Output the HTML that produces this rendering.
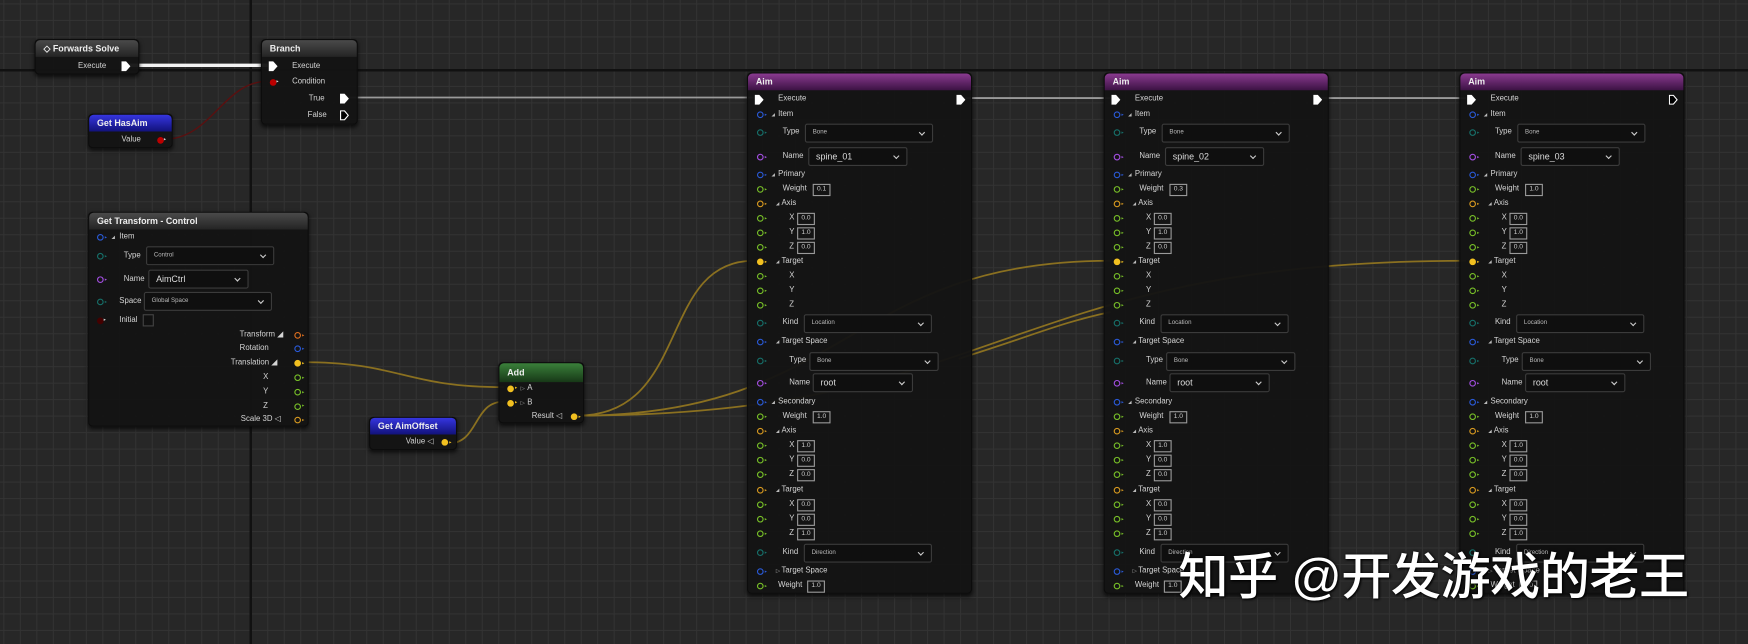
<!DOCTYPE html>
<html><head><meta charset="utf-8"><style>
*{margin:0;padding:0;box-sizing:border-box}
html,body{width:1748px;height:644px;overflow:hidden;background:#262626}
#w{position:absolute;left:0;top:0;width:1568px;height:578px;transform:scale(1.1148,1.1142);transform-origin:0 0;
background-color:#272727;
background-image:linear-gradient(90deg,transparent 224px,#111 224px,#111 226px,transparent 226px),
linear-gradient(0deg,transparent 514px,#111 514px,#111 516px,transparent 516px),
linear-gradient(90deg,#333 1px,transparent 1px),linear-gradient(0deg,#333 1px,transparent 1px);
background-size:100% 100%,100% 100%,14.8px 14.8px,14.8px 14.8px;background-position:0 0,0 0,3px 0,0 4px;
font-family:"Liberation Sans",sans-serif;color:#d8d8d8}
svg.wires{position:absolute;left:0;top:0}
.n{position:absolute;background:rgba(20,20,20,.96);border-radius:4px;box-shadow:0 2px 4px rgba(0,0,0,.7);border:1px solid #0c0c0c}
.h{position:absolute;left:0;top:0;right:0;border-radius:4px 4px 0 0;font-weight:bold;font-size:8px;color:#eee;padding-left:7px;line-height:15px;height:15px}
.gr{background:linear-gradient(#4a4a4a,#242424)}
.bl{background:linear-gradient(#3535e0,#12127a)}
.pp{background:linear-gradient(#8a3a90,#3c1244)}
.gn{background:linear-gradient(#3a803a,#173817)}
.t{position:absolute;font-size:7px;line-height:10px;height:10px;margin-top:-5px;white-space:nowrap;color:#d4d4d4}
.tr{position:absolute;font-size:4px;line-height:10px;height:10px;margin-top:-5px;color:#bbb}
.p{position:absolute;width:6px;height:6px;margin:-3px 0 0 -3px;border-radius:50%;border:1.3px solid}
.p::after{content:"";position:absolute;left:5.5px;top:0.6px;border-left:2px solid;border-left-color:inherit;border-top:1.2px solid transparent;border-bottom:1.2px solid transparent}
.b{border-color:#2a5ad8}.tl{border-color:#16706a}.pu{border-color:#a24ee0}.g{border-color:#78c028}.o{border-color:#d89a20}
.y{border-color:#f2c020;background:#f2c020}.r{border-color:#a00;background:#b00}
.rh{border-color:#600}
.e{position:absolute;width:8px;height:9px;margin:-4.5px 0 0 -4px}
.dd{position:absolute;background:#0f0f0f;border:1px solid #3b3b3b;border-radius:2px;font-size:5.5px;line-height:1;padding-left:6px;color:#bbb;display:flex;align-items:center}
.dd::after{content:"";position:absolute;right:7px;top:5px;width:3px;height:3px;border-right:1px solid #ccc;border-bottom:1px solid #ccc;transform:rotate(45deg)}
.dd.big{font-size:8px;color:#ddd}
.bx{position:absolute;height:11px;margin-top:-5.5px;border:1px solid #9a9a9a;font-size:6px;line-height:9px;text-align:center;color:#ccc}
.wm{position:absolute;left:1057px;top:481px;font-family:"Liberation Sans","Noto Sans CJK SC",sans-serif;font-size:45px;font-weight:500;color:#fff;white-space:nowrap;text-shadow:0 0 3px rgba(0,0,0,.8),1px 1px 2px #000;letter-spacing:-0.5px}
</style></head><body><div id="w">
<svg class="wires" width="1568" height="578" viewBox="0 0 1568 578" fill="none">
<path d="M116 58.6 H240" stroke="#f4f4f4" stroke-width="3"/>
<path d="M313 87.5 H676 M866 88 H996 M1185 88 H1315" stroke="#9a9a9a" stroke-width="1.6"/>
<path d="M147 125 C190 125 200 73 240 73" stroke="#5a1010" stroke-width="1.3"/>
<path d="M270 325 C360 325 362 347.5 452 347.5" stroke="#8a7020" stroke-width="1.6"/>
<path d="M402 398 C430 398 424 360.5 452 360.5" stroke="#8a7020" stroke-width="1.6"/>
<path d="M518 373 C620 373 590 234 676 234" stroke="#8a7020" stroke-width="1.6"/>
<path d="M518 373 C760 373 760 234 996 234" stroke="#8a7020" stroke-width="1.6"/>
<path d="M518 373 C900 373 900 234 1315 234" stroke="#8a7020" stroke-width="1.6"/>
<path d="M860 322 C930 300 950 290 996 280" stroke="#8a7020" stroke-width="1.6"/>
</svg>

<div class="n" style="left:31px;top:35px;width:94px;height:32px">
<div class="h gr">&#9671; Forwards Solve</div>
<div class="t" style="left:38px;top:23.6px">Execute</div>
<svg class="e" style="left:81px;top:23.6px" viewBox="0 0 8 9"><path d="M0 0H4L8 4.5L4 9H0Z" fill="#fff"/></svg>
</div>

<div class="n" style="left:234px;top:35px;width:87px;height:77px">
<div class="h gr">Branch</div>
<svg class="e" style="left:9.5px;top:23.6px" viewBox="0 0 8 9"><path d="M0 0H4L8 4.5L4 9H0Z" fill="#fff"/></svg>
<div class="t" style="left:27px;top:23.6px">Execute</div>
<div class="p r" style="left:10px;top:38px;border:none;width:6px;height:6px"></div>
<div class="t" style="left:27px;top:38px">Condition</div>
<div class="t" style="left:42px;top:52.5px">True</div>
<svg class="e" style="left:74px;top:52.5px" viewBox="0 0 8 9"><path d="M0 0H4L8 4.5L4 9H0Z" fill="#fff"/></svg>
<div class="t" style="left:41px;top:67.5px">False</div>
<svg class="e" style="left:74px;top:67.5px" viewBox="0 0 8 9"><path d="M0.5 0.5H4L7.4 4.5L4 8.5H0.5Z" stroke="#fff" stroke-width="1"/></svg>
</div>

<div class="n" style="left:79px;top:102px;width:76px;height:31px">
<div class="h bl">Get HasAim</div>
<div class="t" style="left:29px;top:23px">Value</div>
<div class="p r" style="left:64px;top:23px;border:none"></div>
</div>

<div class="n" style="left:79px;top:190px;width:198px;height:193px">
<div class="h gr">Get Transform - Control</div>
<div class="p b" style="left:10px;top:22px"></div><div class="tr" style="left:20px;top:22px">&#9698;</div><div class="t" style="left:27px;top:22px">Item</div>
<div class="p tl" style="left:10px;top:39px"></div><div class="t" style="left:31px;top:39px">Type</div>
<div class="dd" style="left:51px;top:30px;width:115px;height:17px">Control</div>
<div class="p pu" style="left:10px;top:60px"></div><div class="t" style="left:31px;top:60px">Name</div>
<div class="dd big" style="left:53px;top:51px;width:90px;height:17px">AimCtrl</div>
<div class="p tl" style="left:10px;top:80px"></div><div class="t" style="left:27px;top:80px">Space</div>
<div class="dd" style="left:49px;top:71px;width:115px;height:17px">Global Space</div>
<div class="p r rh" style="left:10px;top:97px;background:#400;border:none"></div><div class="t" style="left:27px;top:97px">Initial</div>
<div style="position:absolute;left:48px;top:91px;width:10px;height:11px;border:1px solid #444;background:#111"></div>
<div class="t" style="left:135px;top:110px">Transform &#9698;</div><div class="p o" style="left:187px;top:110px;border-color:#e07020"></div>
<div class="t" style="left:135px;top:122px">Rotation</div><div class="p b" style="left:187px;top:122px"></div>
<div class="t" style="left:127px;top:135px">Translation &#9698;</div><div class="p y" style="left:187px;top:135px"></div>
<div class="t" style="left:156px;top:148px">X</div><div class="p g" style="left:187px;top:148px"></div>
<div class="t" style="left:156px;top:161px">Y</div><div class="p g" style="left:187px;top:161px"></div>
<div class="t" style="left:156px;top:173.5px">Z</div><div class="p g" style="left:187px;top:173.5px"></div>
<div class="t" style="left:136px;top:186px">Scale 3D &#9665;</div><div class="p o" style="left:187px;top:186px"></div>
</div>

<div class="n" style="left:447px;top:325px;width:77px;height:55px">
<div class="h gn" style="height:17px;line-height:17px">Add</div>
<div class="p y" style="left:10px;top:22.5px"></div><div class="t" style="left:19px;top:22.5px;font-size:5px;color:#aaa">&#9655;</div><div class="t" style="left:25px;top:22.5px">A</div>
<div class="p y" style="left:10px;top:35.5px"></div><div class="t" style="left:19px;top:35.5px;font-size:5px;color:#aaa">&#9655;</div><div class="t" style="left:25px;top:35.5px">B</div>
<div class="t" style="left:29px;top:48px">Result &#9665;</div><div class="p y" style="left:67px;top:48px"></div>
</div>

<div class="n" style="left:331px;top:374px;width:79px;height:30px">
<div class="h bl">Get AimOffset</div>
<div class="t" style="left:32px;top:22px">Value &#9665;</div>
<div class="p y" style="left:67px;top:22px"></div>
</div>

<div class="n" style="left:670px;top:65px;width:202px;height:468px">
<div class="h pp">Aim</div>
<svg class="e" style="left:10px;top:23px" viewBox="0 0 8 9"><path d="M0 0H4L8 4.5L4 9H0Z" fill="#fff"/></svg>
<div class="t" style="left:27px;top:23px">Execute</div>
<svg class="e" style="left:191px;top:23px" viewBox="0 0 8 9"><path d="M0 0H4L8 4.5L4 9H0Z" fill="#fff"/></svg>
<div class="p b" style="left:11px;top:37px"></div><div class="tr" style="left:21px;top:37px">&#9698;</div><div class="t" style="left:27px;top:37px">Item</div>
<div class="p tl" style="left:11px;top:53px"></div><div class="t" style="left:31px;top:53px">Type</div><div class="dd" style="left:51px;top:45px;width:115px;height:17px">Bone</div>
<div class="p pu" style="left:11px;top:75px"></div><div class="t" style="left:31px;top:75px">Name</div><div class="dd big" style="left:54px;top:66px;width:89px;height:17px">spine_01</div>
<div class="p b" style="left:11px;top:91px"></div><div class="tr" style="left:21px;top:91px">&#9698;</div><div class="t" style="left:27px;top:91px">Primary</div>
<div class="p g" style="left:11px;top:104px"></div><div class="t" style="left:31px;top:104px">Weight</div><div class="bx" style="left:58px;top:104px;width:16px">0.1</div>
<div class="p o" style="left:11px;top:117px"></div><div class="tr" style="left:25px;top:117px">&#9698;</div><div class="t" style="left:30px;top:117px">Axis</div>
<div class="p g" style="left:11px;top:130px"></div><div class="t" style="left:37px;top:130px">X</div><div class="bx" style="left:44px;top:130px;width:16px">0.0</div>
<div class="p g" style="left:11px;top:143px"></div><div class="t" style="left:37px;top:143px">Y</div><div class="bx" style="left:44px;top:143px;width:16px">1.0</div>
<div class="p g" style="left:11px;top:156px"></div><div class="t" style="left:37px;top:156px">Z</div><div class="bx" style="left:44px;top:156px;width:16px">0.0</div>
<div class="p y" style="left:11px;top:169px"></div><div class="tr" style="left:25px;top:169px">&#9698;</div><div class="t" style="left:30px;top:169px">Target</div>
<div class="p g" style="left:11px;top:182px"></div><div class="t" style="left:37px;top:182px">X</div>
<div class="p g" style="left:11px;top:195px"></div><div class="t" style="left:37px;top:195px">Y</div>
<div class="p g" style="left:11px;top:208px"></div><div class="t" style="left:37px;top:208px">Z</div>
<div class="p tl" style="left:11px;top:224px"></div><div class="t" style="left:31px;top:224px">Kind</div><div class="dd" style="left:50px;top:216px;width:115px;height:17px">Location</div>
<div class="p b" style="left:11px;top:241px"></div><div class="tr" style="left:25px;top:241px">&#9698;</div><div class="t" style="left:30px;top:241px">Target Space</div>
<div class="p tl" style="left:11px;top:258px"></div><div class="t" style="left:37px;top:258px">Type</div><div class="dd" style="left:55px;top:250px;width:116px;height:17px">Bone</div>
<div class="p pu" style="left:11px;top:278px"></div><div class="t" style="left:37px;top:278px">Name</div><div class="dd big" style="left:58px;top:269px;width:90px;height:17px">root</div>
<div class="p b" style="left:11px;top:295px"></div><div class="tr" style="left:21px;top:295px">&#9698;</div><div class="t" style="left:27px;top:295px">Secondary</div>
<div class="p g" style="left:11px;top:308px"></div><div class="t" style="left:31px;top:308px">Weight</div><div class="bx" style="left:58px;top:308px;width:16px">1.0</div>
<div class="p o" style="left:11px;top:321px"></div><div class="tr" style="left:25px;top:321px">&#9698;</div><div class="t" style="left:30px;top:321px">Axis</div>
<div class="p g" style="left:11px;top:334px"></div><div class="t" style="left:37px;top:334px">X</div><div class="bx" style="left:44px;top:334px;width:16px">1.0</div>
<div class="p g" style="left:11px;top:347px"></div><div class="t" style="left:37px;top:347px">Y</div><div class="bx" style="left:44px;top:347px;width:16px">0.0</div>
<div class="p g" style="left:11px;top:360px"></div><div class="t" style="left:37px;top:360px">Z</div><div class="bx" style="left:44px;top:360px;width:16px">0.0</div>
<div class="p o" style="left:11px;top:374px"></div><div class="tr" style="left:25px;top:374px">&#9698;</div><div class="t" style="left:30px;top:374px">Target</div>
<div class="p g" style="left:11px;top:387px"></div><div class="t" style="left:37px;top:387px">X</div><div class="bx" style="left:44px;top:387px;width:16px">0.0</div>
<div class="p g" style="left:11px;top:400px"></div><div class="t" style="left:37px;top:400px">Y</div><div class="bx" style="left:44px;top:400px;width:16px">0.0</div>
<div class="p g" style="left:11px;top:413px"></div><div class="t" style="left:37px;top:413px">Z</div><div class="bx" style="left:44px;top:413px;width:16px">1.0</div>
<div class="p tl" style="left:11px;top:430px"></div><div class="t" style="left:31px;top:430px">Kind</div><div class="dd" style="left:50px;top:422px;width:115px;height:17px">Direction</div>
<div class="p b" style="left:11px;top:447px"></div><div class="t" style="left:25px;top:447px;font-size:5px;color:#aaa">&#9655;</div><div class="t" style="left:30px;top:447px">Target Space</div>
<div class="p g" style="left:11px;top:460px"></div><div class="t" style="left:27px;top:460px">Weight</div><div class="bx" style="left:53px;top:460px;width:16px">1.0</div>
</div>

<div class="n" style="left:990px;top:65px;width:202px;height:468px">
<div class="h pp">Aim</div>
<svg class="e" style="left:10px;top:23px" viewBox="0 0 8 9"><path d="M0 0H4L8 4.5L4 9H0Z" fill="#fff"/></svg>
<div class="t" style="left:27px;top:23px">Execute</div>
<svg class="e" style="left:191px;top:23px" viewBox="0 0 8 9"><path d="M0 0H4L8 4.5L4 9H0Z" fill="#fff"/></svg>
<div class="p b" style="left:11px;top:37px"></div><div class="tr" style="left:21px;top:37px">&#9698;</div><div class="t" style="left:27px;top:37px">Item</div>
<div class="p tl" style="left:11px;top:53px"></div><div class="t" style="left:31px;top:53px">Type</div><div class="dd" style="left:51px;top:45px;width:115px;height:17px">Bone</div>
<div class="p pu" style="left:11px;top:75px"></div><div class="t" style="left:31px;top:75px">Name</div><div class="dd big" style="left:54px;top:66px;width:89px;height:17px">spine_02</div>
<div class="p b" style="left:11px;top:91px"></div><div class="tr" style="left:21px;top:91px">&#9698;</div><div class="t" style="left:27px;top:91px">Primary</div>
<div class="p g" style="left:11px;top:104px"></div><div class="t" style="left:31px;top:104px">Weight</div><div class="bx" style="left:58px;top:104px;width:16px">0.3</div>
<div class="p o" style="left:11px;top:117px"></div><div class="tr" style="left:25px;top:117px">&#9698;</div><div class="t" style="left:30px;top:117px">Axis</div>
<div class="p g" style="left:11px;top:130px"></div><div class="t" style="left:37px;top:130px">X</div><div class="bx" style="left:44px;top:130px;width:16px">0.0</div>
<div class="p g" style="left:11px;top:143px"></div><div class="t" style="left:37px;top:143px">Y</div><div class="bx" style="left:44px;top:143px;width:16px">1.0</div>
<div class="p g" style="left:11px;top:156px"></div><div class="t" style="left:37px;top:156px">Z</div><div class="bx" style="left:44px;top:156px;width:16px">0.0</div>
<div class="p y" style="left:11px;top:169px"></div><div class="tr" style="left:25px;top:169px">&#9698;</div><div class="t" style="left:30px;top:169px">Target</div>
<div class="p g" style="left:11px;top:182px"></div><div class="t" style="left:37px;top:182px">X</div>
<div class="p g" style="left:11px;top:195px"></div><div class="t" style="left:37px;top:195px">Y</div>
<div class="p g" style="left:11px;top:208px"></div><div class="t" style="left:37px;top:208px">Z</div>
<div class="p tl" style="left:11px;top:224px"></div><div class="t" style="left:31px;top:224px">Kind</div><div class="dd" style="left:50px;top:216px;width:115px;height:17px">Location</div>
<div class="p b" style="left:11px;top:241px"></div><div class="tr" style="left:25px;top:241px">&#9698;</div><div class="t" style="left:30px;top:241px">Target Space</div>
<div class="p tl" style="left:11px;top:258px"></div><div class="t" style="left:37px;top:258px">Type</div><div class="dd" style="left:55px;top:250px;width:116px;height:17px">Bone</div>
<div class="p pu" style="left:11px;top:278px"></div><div class="t" style="left:37px;top:278px">Name</div><div class="dd big" style="left:58px;top:269px;width:90px;height:17px">root</div>
<div class="p b" style="left:11px;top:295px"></div><div class="tr" style="left:21px;top:295px">&#9698;</div><div class="t" style="left:27px;top:295px">Secondary</div>
<div class="p g" style="left:11px;top:308px"></div><div class="t" style="left:31px;top:308px">Weight</div><div class="bx" style="left:58px;top:308px;width:16px">1.0</div>
<div class="p o" style="left:11px;top:321px"></div><div class="tr" style="left:25px;top:321px">&#9698;</div><div class="t" style="left:30px;top:321px">Axis</div>
<div class="p g" style="left:11px;top:334px"></div><div class="t" style="left:37px;top:334px">X</div><div class="bx" style="left:44px;top:334px;width:16px">1.0</div>
<div class="p g" style="left:11px;top:347px"></div><div class="t" style="left:37px;top:347px">Y</div><div class="bx" style="left:44px;top:347px;width:16px">0.0</div>
<div class="p g" style="left:11px;top:360px"></div><div class="t" style="left:37px;top:360px">Z</div><div class="bx" style="left:44px;top:360px;width:16px">0.0</div>
<div class="p o" style="left:11px;top:374px"></div><div class="tr" style="left:25px;top:374px">&#9698;</div><div class="t" style="left:30px;top:374px">Target</div>
<div class="p g" style="left:11px;top:387px"></div><div class="t" style="left:37px;top:387px">X</div><div class="bx" style="left:44px;top:387px;width:16px">0.0</div>
<div class="p g" style="left:11px;top:400px"></div><div class="t" style="left:37px;top:400px">Y</div><div class="bx" style="left:44px;top:400px;width:16px">0.0</div>
<div class="p g" style="left:11px;top:413px"></div><div class="t" style="left:37px;top:413px">Z</div><div class="bx" style="left:44px;top:413px;width:16px">1.0</div>
<div class="p tl" style="left:11px;top:430px"></div><div class="t" style="left:31px;top:430px">Kind</div><div class="dd" style="left:50px;top:422px;width:115px;height:17px">Direction</div>
<div class="p b" style="left:11px;top:447px"></div><div class="t" style="left:25px;top:447px;font-size:5px;color:#aaa">&#9655;</div><div class="t" style="left:30px;top:447px">Target Space</div>
<div class="p g" style="left:11px;top:460px"></div><div class="t" style="left:27px;top:460px">Weight</div><div class="bx" style="left:53px;top:460px;width:16px">1.0</div>
</div>

<div class="n" style="left:1309px;top:65px;width:202px;height:468px">
<div class="h pp">Aim</div>
<svg class="e" style="left:10px;top:23px" viewBox="0 0 8 9"><path d="M0 0H4L8 4.5L4 9H0Z" fill="#fff"/></svg>
<div class="t" style="left:27px;top:23px">Execute</div>
<svg class="e" style="left:191px;top:23px" viewBox="0 0 8 9"><path d="M0.5 0.5H4L7.4 4.5L4 8.5H0.5Z" stroke="#fff" stroke-width="1"/></svg>
<div class="p b" style="left:11px;top:37px"></div><div class="tr" style="left:21px;top:37px">&#9698;</div><div class="t" style="left:27px;top:37px">Item</div>
<div class="p tl" style="left:11px;top:53px"></div><div class="t" style="left:31px;top:53px">Type</div><div class="dd" style="left:51px;top:45px;width:115px;height:17px">Bone</div>
<div class="p pu" style="left:11px;top:75px"></div><div class="t" style="left:31px;top:75px">Name</div><div class="dd big" style="left:54px;top:66px;width:89px;height:17px">spine_03</div>
<div class="p b" style="left:11px;top:91px"></div><div class="tr" style="left:21px;top:91px">&#9698;</div><div class="t" style="left:27px;top:91px">Primary</div>
<div class="p g" style="left:11px;top:104px"></div><div class="t" style="left:31px;top:104px">Weight</div><div class="bx" style="left:58px;top:104px;width:16px">1.0</div>
<div class="p o" style="left:11px;top:117px"></div><div class="tr" style="left:25px;top:117px">&#9698;</div><div class="t" style="left:30px;top:117px">Axis</div>
<div class="p g" style="left:11px;top:130px"></div><div class="t" style="left:37px;top:130px">X</div><div class="bx" style="left:44px;top:130px;width:16px">0.0</div>
<div class="p g" style="left:11px;top:143px"></div><div class="t" style="left:37px;top:143px">Y</div><div class="bx" style="left:44px;top:143px;width:16px">1.0</div>
<div class="p g" style="left:11px;top:156px"></div><div class="t" style="left:37px;top:156px">Z</div><div class="bx" style="left:44px;top:156px;width:16px">0.0</div>
<div class="p y" style="left:11px;top:169px"></div><div class="tr" style="left:25px;top:169px">&#9698;</div><div class="t" style="left:30px;top:169px">Target</div>
<div class="p g" style="left:11px;top:182px"></div><div class="t" style="left:37px;top:182px">X</div>
<div class="p g" style="left:11px;top:195px"></div><div class="t" style="left:37px;top:195px">Y</div>
<div class="p g" style="left:11px;top:208px"></div><div class="t" style="left:37px;top:208px">Z</div>
<div class="p tl" style="left:11px;top:224px"></div><div class="t" style="left:31px;top:224px">Kind</div><div class="dd" style="left:50px;top:216px;width:115px;height:17px">Location</div>
<div class="p b" style="left:11px;top:241px"></div><div class="tr" style="left:25px;top:241px">&#9698;</div><div class="t" style="left:30px;top:241px">Target Space</div>
<div class="p tl" style="left:11px;top:258px"></div><div class="t" style="left:37px;top:258px">Type</div><div class="dd" style="left:55px;top:250px;width:116px;height:17px">Bone</div>
<div class="p pu" style="left:11px;top:278px"></div><div class="t" style="left:37px;top:278px">Name</div><div class="dd big" style="left:58px;top:269px;width:90px;height:17px">root</div>
<div class="p b" style="left:11px;top:295px"></div><div class="tr" style="left:21px;top:295px">&#9698;</div><div class="t" style="left:27px;top:295px">Secondary</div>
<div class="p g" style="left:11px;top:308px"></div><div class="t" style="left:31px;top:308px">Weight</div><div class="bx" style="left:58px;top:308px;width:16px">1.0</div>
<div class="p o" style="left:11px;top:321px"></div><div class="tr" style="left:25px;top:321px">&#9698;</div><div class="t" style="left:30px;top:321px">Axis</div>
<div class="p g" style="left:11px;top:334px"></div><div class="t" style="left:37px;top:334px">X</div><div class="bx" style="left:44px;top:334px;width:16px">1.0</div>
<div class="p g" style="left:11px;top:347px"></div><div class="t" style="left:37px;top:347px">Y</div><div class="bx" style="left:44px;top:347px;width:16px">0.0</div>
<div class="p g" style="left:11px;top:360px"></div><div class="t" style="left:37px;top:360px">Z</div><div class="bx" style="left:44px;top:360px;width:16px">0.0</div>
<div class="p o" style="left:11px;top:374px"></div><div class="tr" style="left:25px;top:374px">&#9698;</div><div class="t" style="left:30px;top:374px">Target</div>
<div class="p g" style="left:11px;top:387px"></div><div class="t" style="left:37px;top:387px">X</div><div class="bx" style="left:44px;top:387px;width:16px">0.0</div>
<div class="p g" style="left:11px;top:400px"></div><div class="t" style="left:37px;top:400px">Y</div><div class="bx" style="left:44px;top:400px;width:16px">0.0</div>
<div class="p g" style="left:11px;top:413px"></div><div class="t" style="left:37px;top:413px">Z</div><div class="bx" style="left:44px;top:413px;width:16px">1.0</div>
<div class="p tl" style="left:11px;top:430px"></div><div class="t" style="left:31px;top:430px">Kind</div><div class="dd" style="left:50px;top:422px;width:115px;height:17px">Direction</div>
<div class="p b" style="left:11px;top:447px"></div><div class="t" style="left:25px;top:447px;font-size:5px;color:#aaa">&#9655;</div><div class="t" style="left:30px;top:447px">Target Space</div>
<div class="p g" style="left:11px;top:460px"></div><div class="t" style="left:27px;top:460px">Weight</div><div class="bx" style="left:53px;top:460px;width:16px">1.0</div>
</div>

<div class="wm">知乎 @开发游戏的老王</div>
</div></body></html>
